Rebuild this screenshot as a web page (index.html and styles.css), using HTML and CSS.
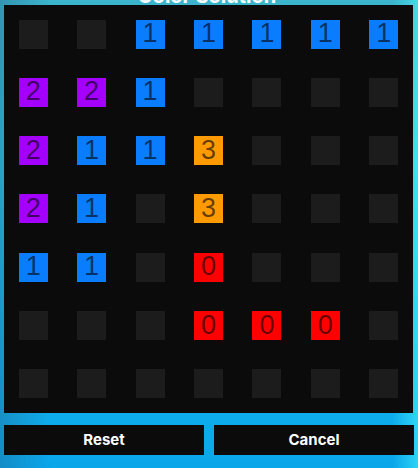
FILE: index.html
```html
<!DOCTYPE html>
<html>
<head>
<meta charset="utf-8">
<link rel="stylesheet" href="styles.css">
</head>
<body>
<div class="scene">
  <div class="title">Color Solution</div>
  <div class="board">
    <div class="slot"><span class="tile empty"></span></div>
    <div class="slot"><span class="tile empty"></span></div>
    <div class="slot"><span class="tile blue">1</span></div>
    <div class="slot"><span class="tile blue">1</span></div>
    <div class="slot"><span class="tile blue">1</span></div>
    <div class="slot"><span class="tile blue">1</span></div>
    <div class="slot"><span class="tile blue">1</span></div>

    <div class="slot"><span class="tile purple">2</span></div>
    <div class="slot"><span class="tile purple">2</span></div>
    <div class="slot"><span class="tile blue">1</span></div>
    <div class="slot"><span class="tile empty"></span></div>
    <div class="slot"><span class="tile empty"></span></div>
    <div class="slot"><span class="tile empty"></span></div>
    <div class="slot"><span class="tile empty"></span></div>

    <div class="slot"><span class="tile purple">2</span></div>
    <div class="slot"><span class="tile blue">1</span></div>
    <div class="slot"><span class="tile blue">1</span></div>
    <div class="slot"><span class="tile orange">3</span></div>
    <div class="slot"><span class="tile empty"></span></div>
    <div class="slot"><span class="tile empty"></span></div>
    <div class="slot"><span class="tile empty"></span></div>

    <div class="slot"><span class="tile purple">2</span></div>
    <div class="slot"><span class="tile blue">1</span></div>
    <div class="slot"><span class="tile empty"></span></div>
    <div class="slot"><span class="tile orange">3</span></div>
    <div class="slot"><span class="tile empty"></span></div>
    <div class="slot"><span class="tile empty"></span></div>
    <div class="slot"><span class="tile empty"></span></div>

    <div class="slot"><span class="tile blue">1</span></div>
    <div class="slot"><span class="tile blue">1</span></div>
    <div class="slot"><span class="tile empty"></span></div>
    <div class="slot"><span class="tile red">0</span></div>
    <div class="slot"><span class="tile empty"></span></div>
    <div class="slot"><span class="tile empty"></span></div>
    <div class="slot"><span class="tile empty"></span></div>

    <div class="slot"><span class="tile empty"></span></div>
    <div class="slot"><span class="tile empty"></span></div>
    <div class="slot"><span class="tile empty"></span></div>
    <div class="slot"><span class="tile red">0</span></div>
    <div class="slot"><span class="tile red">0</span></div>
    <div class="slot"><span class="tile red">0</span></div>
    <div class="slot"><span class="tile empty"></span></div>

    <div class="slot"><span class="tile empty"></span></div>
    <div class="slot"><span class="tile empty"></span></div>
    <div class="slot"><span class="tile empty"></span></div>
    <div class="slot"><span class="tile empty"></span></div>
    <div class="slot"><span class="tile empty"></span></div>
    <div class="slot"><span class="tile empty"></span></div>
    <div class="slot"><span class="tile empty"></span></div>
  </div>
  <div class="actions">
    <button class="btn">Reset</button>
    <button class="btn">Cancel</button>
  </div>
</div>
</body>
</html>
```

FILE: styles.css
```css
html, body {
  margin: 0;
  padding: 0;
  width: 418px;
  height: 468px;
  overflow: hidden;
}

body {
  background:
    linear-gradient(90deg, rgba(40, 90, 130, 0.35) 0%, rgba(0, 0, 0, 0) 12%, rgba(0, 0, 0, 0) 94%, rgba(80, 255, 255, 0.5) 100%),
    linear-gradient(180deg, #3bb4cc 0%, #2fc6e6 35%, #18b8f0 65%, #0aa6ea 100%);
  font-family: "Liberation Sans", Arial, sans-serif;
}

.scene {
  width: 410px;
  padding: 5px 0 0 4px;
  display: flex;
  flex-direction: column;
  position: relative;
}

.title {
  position: absolute;
  left: 0;
  right: 0;
  top: -14px;
  text-align: center;
  color: #ffffff;
  font-family: "Inter", sans-serif;
  font-weight: 700;
  font-size: 20px;
  line-height: 20px;
}

.board {
  width: 409px;
  height: 408px;
  background: #0b0b0b;
  display: grid;
  grid-template-columns: repeat(7, 1fr);
  grid-template-rows: repeat(7, 1fr);
  position: relative;
}

.slot {
  display: flex;
  align-items: center;
  justify-content: center;
}

.tile {
  width: 29px;
  height: 29px;
  display: flex;
  align-items: center;
  justify-content: center;
  font-size: 27px;
  line-height: 27px;
  padding-bottom: 1px;
  box-sizing: border-box;
  color: rgba(0, 0, 0, 0.62);
}

.empty { background: #1c1c1c; }
.blue { background: #0a7dff; }
.purple { background: #a400ff; }
.orange { background: #ff9b00; }
.red { background: #ff0000; }

.actions {
  display: grid;
  grid-template-columns: 200px 200px;
  column-gap: 10px;
  margin-top: 12px;
}

.btn {
  height: 30px;
  border: 0;
  margin: 0;
  padding: 0;
  background: #0b0b0b;
  color: #ffffff;
  font-family: "Inter", sans-serif;
  font-weight: 700;
  font-size: 15px;
  line-height: 30px;
  text-align: center;
}
```
